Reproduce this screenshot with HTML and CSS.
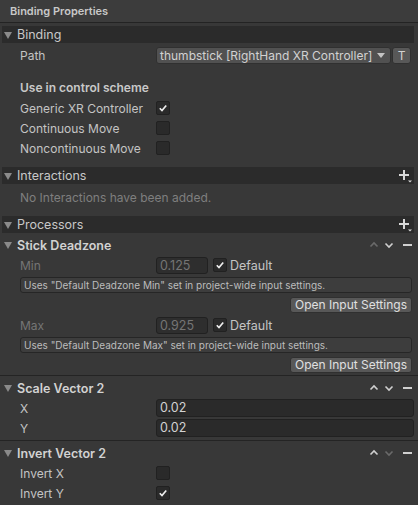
FILE: index.html
```html
<!DOCTYPE html>
<html lang="en">
<head>
    <meta charset="UTF-8">
    <title>Binding Properties</title>
    <link rel="stylesheet" href="styles.css">
</head>
<body>
    <div class="titlebar">Binding Properties</div>

    <div class="panel">
        <!-- Binding -->
        <div class="section-hdr"><span class="fold"></span>Binding</div>
        <div class="row row-path">
            <span class="label">Path</span>
            <div class="dropdown">
                <span>thumbstick [RightHand XR Controller]</span>
                <span class="caret"></span>
            </div>
            <div class="tbtn">T</div>
        </div>

        <div class="subhead">Use in control scheme</div>
        <div class="row">
            <span class="label">Generic XR Controller</span>
            <span class="check on"><svg viewBox="0 0 13 13"><path d="M3 6.8 L5.4 9.2 L10 3.8" /></svg></span>
        </div>
        <div class="row">
            <span class="label">Continuous Move</span>
            <span class="check"></span>
        </div>
        <div class="row">
            <span class="label">Noncontinuous Move</span>
            <span class="check"></span>
        </div>

        <!-- Interactions -->
        <div class="section-hdr gap"><span class="fold"></span>Interactions
            <svg class="plus" viewBox="0 0 14 14"><path d="M6 1 V11 M1 6 H11" /><path class="tri" d="M10 11.5 H14 L12 13.5 Z" /></svg>
        </div>
        <div class="row empty">No Interactions have been added.</div>

        <!-- Processors -->
        <div class="section-hdr gap"><span class="fold"></span>Processors
            <svg class="plus" viewBox="0 0 14 14"><path d="M6 1 V11 M1 6 H11" /><path class="tri" d="M10 11.5 H14 L12 13.5 Z" /></svg>
        </div>

        <div class="proc">
            <div class="proc-hdr">
                <span class="fold"></span>Stick Deadzone
                <div class="tools">
                    <svg class="dim" viewBox="0 0 10 10"><path d="M1.5 6.5 L5 3 L8.5 6.5" /></svg>
                    <svg viewBox="0 0 10 10"><path d="M1.5 3.5 L5 7 L8.5 3.5" /></svg>
                    <span class="minus"></span>
                </div>
            </div>
            <div class="row disabled">
                <span class="label">Min</span>
                <div class="field short">0.125</div>
                <span class="check on small-gap"><svg viewBox="0 0 13 13"><path d="M3 6.8 L5.4 9.2 L10 3.8" /></svg></span>
                <span class="check-label">Default</span>
            </div>
            <div class="helpbox">Uses "Default Deadzone Min" set in project-wide input settings.</div>
            <div class="btn-row"><div class="btn">Open Input Settings</div></div>
            <div class="row disabled spaced">
                <span class="label">Max</span>
                <div class="field short">0.925</div>
                <span class="check on small-gap"><svg viewBox="0 0 13 13"><path d="M3 6.8 L5.4 9.2 L10 3.8" /></svg></span>
                <span class="check-label">Default</span>
            </div>
            <div class="helpbox">Uses "Default Deadzone Max" set in project-wide input settings.</div>
            <div class="btn-row"><div class="btn">Open Input Settings</div></div>
        </div>

        <div class="proc">
            <div class="proc-hdr">
                <span class="fold"></span>Scale Vector 2
                <div class="tools">
                    <svg viewBox="0 0 10 10"><path d="M1.5 6.5 L5 3 L8.5 6.5" /></svg>
                    <svg viewBox="0 0 10 10"><path d="M1.5 3.5 L5 7 L8.5 3.5" /></svg>
                    <span class="minus"></span>
                </div>
            </div>
            <div class="row">
                <span class="label">X</span>
                <div class="field wide">0.02</div>
            </div>
            <div class="row">
                <span class="label">Y</span>
                <div class="field wide">0.02</div>
            </div>
        </div>

        <div class="proc">
            <div class="proc-hdr">
                <span class="fold"></span>Invert Vector 2
                <div class="tools">
                    <svg viewBox="0 0 10 10"><path d="M1.5 6.5 L5 3 L8.5 6.5" /></svg>
                    <svg class="dim" viewBox="0 0 10 10"><path d="M1.5 3.5 L5 7 L8.5 3.5" /></svg>
                    <span class="minus"></span>
                </div>
            </div>
            <div class="row">
                <span class="label">Invert X</span>
                <span class="check"></span>
            </div>
            <div class="row">
                <span class="label">Invert Y</span>
                <span class="check on"><svg viewBox="0 0 13 13"><path d="M3 6.8 L5.4 9.2 L10 3.8" /></svg></span>
            </div>
        </div>
    </div>
</body>
</html>
```

FILE: styles.css
```css
body {
    margin: 0;
    background-color: #383838;
    color: #c4c4c4;
    font-family: Inter, 'Noto Sans', sans-serif;
    font-size: 12px;
    width: 418px;
    height: 505px;
    overflow: hidden;
}
.titlebar {
    height: 22px;
    line-height: 22px;
    padding-left: 10px;
    font-size: 11px;
    font-weight: 600;
    color: #c8c8c8;
    background-color: #3c3c3c;
    border-bottom: 1px solid #232323;
}
.panel {
    padding: 3px 4px 0 2px;
}
.section-hdr {
    display: flex;
    align-items: center;
    height: 17px;
    background-color: #2b2b2b;
    font-size: 12.5px;
    color: #c8c8c8;
    position: relative;
}
.section-hdr.gap {
    margin-top: 9px;
}
.fold {
    width: 0;
    height: 0;
    margin: 1px 5px 0 2px;
    border-left: 4px solid transparent;
    border-right: 4px solid transparent;
    border-top: 7px solid #8a8a8a;
}
.plus {
    position: absolute;
    right: 2px;
    top: 2px;
    width: 14px;
    height: 14px;
}
.plus path {
    stroke: #d8d8d8;
    stroke-width: 2;
    fill: none;
}
.plus path.tri {
    stroke: none;
    fill: #d8d8d8;
}
.row {
    display: flex;
    align-items: center;
    height: 20px;
}
.row-path {
    margin-top: 2px;
}
.label {
    width: 136px;
    flex: none;
    padding-left: 18px;
    white-space: nowrap;
}
.subhead {
    margin-top: 13px;
    height: 20px;
    line-height: 20px;
    padding-left: 18px;
    font-weight: 600;
    color: #c8c8c8;
}
.dropdown {
    box-sizing: border-box;
    display: flex;
    align-items: center;
    justify-content: space-between;
    width: 235px;
    height: 17px;
    padding: 0 5px 0 3px;
    background-color: #515151;
    border: 1px solid #303030;
    border-radius: 3px;
    color: #d2d2d2;
    font-size: 12px;
    white-space: nowrap;
}
.caret {
    width: 0;
    height: 0;
    border-left: 4px solid transparent;
    border-right: 4px solid transparent;
    border-top: 5px solid #c4c4c4;
}
.tbtn {
    box-sizing: border-box;
    width: 19px;
    height: 17px;
    margin-left: 1px;
    background-color: #585858;
    border: 1px solid #303030;
    border-radius: 3px;
    text-align: center;
    line-height: 15px;
    color: #d2d2d2;
    font-size: 12px;
}
.check {
    box-sizing: border-box;
    width: 14px;
    height: 14px;
    background-color: #2a2a2a;
    border: 1px solid #212121;
    border-radius: 2px;
    display: flex;
}
.check svg {
    width: 12px;
    height: 12px;
}
.check path {
    stroke: #eeeeee;
    stroke-width: 1.8;
    fill: none;
}
.check.small-gap {
    margin-left: 5px;
}
.check-label {
    margin-left: 3px;
    color: #c4c4c4;
    font-size: 12.5px;
}
.empty {
    margin-top: 3px;
    padding-left: 18px;
    color: #7f7f7f;
}
.proc {
    border-bottom: 1px solid #242424;
    padding-bottom: 2px;
    margin: 0 -4px 0 -2px;
    padding-left: 2px;
    padding-right: 4px;
}
.proc-hdr {
    display: flex;
    align-items: center;
    height: 20px;
    margin-top: 2px;
    font-size: 12.5px;
    font-weight: 600;
    color: #d2d2d2;
}
.tools {
    margin-left: auto;
    display: flex;
    align-items: center;
    gap: 5px;
    padding-right: 2px;
}
.tools svg {
    width: 10px;
    height: 10px;
}
.tools path {
    stroke: #d0d0d0;
    stroke-width: 1.6;
    fill: none;
}
.tools svg.dim path {
    stroke: #6a6a6a;
}
.minus {
    width: 9px;
    height: 2px;
    margin-left: 4px;
    background-color: #d0d0d0;
}
.field {
    box-sizing: border-box;
    height: 17px;
    line-height: 15px;
    padding-left: 3px;
    background-color: #2a2a2a;
    border: 1px solid #212121;
    border-radius: 3px;
    color: #d2d2d2;
    font-size: 12.5px;
}
.field.short {
    width: 52px;
}
.field.wide {
    flex: 1;
    height: 18px;
    line-height: 16px;
}
.disabled .label,
.disabled .field {
    color: #757575;
}
.disabled .field {
    background-color: #2e2e2e;
}
.disabled.spaced {
    margin-top: 2px;
}
.helpbox {
    box-sizing: border-box;
    margin: 2px 2px 0 18px;
    height: 16px;
    line-height: 14px;
    padding-left: 3px;
    background-color: #3d3d3d;
    border: 1px solid #262626;
    border-radius: 3px;
    font-size: 10px;
    color: #bcbcbc;
    white-space: nowrap;
}
.btn-row {
    display: flex;
    justify-content: flex-end;
    margin-top: 4px;
    padding-right: 2px;
}
.btn {
    box-sizing: border-box;
    width: 122px;
    height: 16px;
    line-height: 14px;
    text-align: center;
    background-color: #585858;
    border: 1px solid #303030;
    border-radius: 3px;
    color: #e0e0e0;
    font-size: 12px;
    white-space: nowrap;
}
```
